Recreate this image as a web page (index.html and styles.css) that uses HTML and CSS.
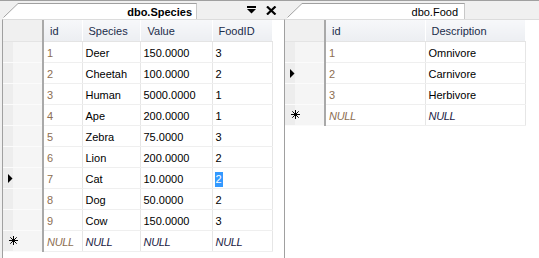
FILE: index.html
```html
<!DOCTYPE html>
<html>
<head>
<meta charset="utf-8">
<link rel="stylesheet" href="styles.css">
</head>
<body>
<div class="wrap">
  <section class="pane pane-left">
    <div class="strip">
      <svg class="slant" width="18" height="18" viewBox="0 0 18 18"><path d="M0 18 L0 16.5 L14.5 2 L18 2 L18 18 Z" fill="#fff"/><path d="M0.5 16.5 L15 2.5 L18 2.5" fill="none" stroke="#a0a0a0" stroke-width="1"/></svg>
      <div class="tab tab-active">dbo.Species</div>
      <div class="tools">
        <svg width="10" height="8" viewBox="0 0 10 8"><rect x="0" y="0" width="9" height="2" fill="#000"/><path d="M0 3 L9 3 L4.5 7.5 Z" fill="#000"/></svg>
        <svg width="11" height="9" viewBox="0 0 11 9"><path d="M1 0.5 L9.5 8.5 M9.5 0.5 L1 8.5" stroke="#000" stroke-width="2.2"/></svg>
      </div>
    </div>
    <div class="body">
      <table class="grid grid-species">
        <thead>
          <tr><th class="rh"></th><th class="c-id">id</th><th class="c-sp">Species</th><th class="c-val">Value</th><th class="c-fid">FoodID</th></tr>
        </thead>
        <tbody>
          <tr><td class="rh"></td><td class="idv">1</td><td>Deer</td><td>150.0000</td><td>3</td></tr>
          <tr><td class="rh"></td><td class="idv">2</td><td>Cheetah</td><td>100.0000</td><td>2</td></tr>
          <tr><td class="rh"></td><td class="idv">3</td><td>Human</td><td>5000.0000</td><td>1</td></tr>
          <tr><td class="rh"></td><td class="idv">4</td><td>Ape</td><td>200.0000</td><td>1</td></tr>
          <tr><td class="rh"></td><td class="idv">5</td><td>Zebra</td><td>75.0000</td><td>3</td></tr>
          <tr><td class="rh"></td><td class="idv">6</td><td>Lion</td><td>200.0000</td><td>2</td></tr>
          <tr><td class="rh"><svg class="arrow" width="5" height="9" viewBox="0 0 5 9"><path d="M0 0 L4.5 4.5 L0 9 Z" fill="#000"/></svg></td><td class="idv">7</td><td>Cat</td><td>10.0000</td><td><span class="sel">2</span></td></tr>
          <tr><td class="rh"></td><td class="idv">8</td><td>Dog</td><td>50.0000</td><td>2</td></tr>
          <tr><td class="rh"></td><td class="idv">9</td><td>Cow</td><td>150.0000</td><td>3</td></tr>
          <tr><td class="rh"><svg class="star" width="9" height="9" viewBox="0 0 9 9"><path d="M4.5 0 V9 M0 4.5 H9 M1.3 1.3 L7.7 7.7 M7.7 1.3 L1.3 7.7" stroke="#000" stroke-width="1"/></svg></td><td class="idv null">NULL</td><td class="null">NULL</td><td class="null">NULL</td><td class="null">NULL</td></tr>
        </tbody>
      </table>
    </div>
  </section>
  <section class="pane pane-right">
    <div class="strip">
      <svg class="slant" width="18" height="18" viewBox="0 0 18 18"><path d="M0 18 L0 16.5 L14.5 2 L18 2 L18 18 Z" fill="#fff"/><path d="M0.5 16.5 L15 2.5 L18 2.5" fill="none" stroke="#a0a0a0" stroke-width="1"/></svg>
      <div class="tab tab-food">dbo.Food</div>
    </div>
    <div class="body">
      <table class="grid grid-food">
        <thead>
          <tr><th class="rh"></th><th class="c-fid2">id</th><th class="c-desc">Description</th></tr>
        </thead>
        <tbody>
          <tr><td class="rh"></td><td class="idv">1</td><td>Omnivore</td></tr>
          <tr><td class="rh"><svg class="arrow" width="5" height="9" viewBox="0 0 5 9"><path d="M0 0 L4.5 4.5 L0 9 Z" fill="#000"/></svg></td><td class="idv">2</td><td>Carnivore</td></tr>
          <tr><td class="rh"></td><td class="idv">3</td><td>Herbivore</td></tr>
          <tr><td class="rh"><svg class="star" width="9" height="9" viewBox="0 0 9 9"><path d="M4.5 0 V9 M0 4.5 H9 M1.3 1.3 L7.7 7.7 M7.7 1.3 L1.3 7.7" stroke="#000" stroke-width="1"/></svg></td><td class="idv null">NULL</td><td class="null">NULL</td></tr>
        </tbody>
      </table>
    </div>
  </section>
</div>
</body>
</html>
```
FILE: styles.css
```css
html, body {
  margin: 0;
  padding: 0;
  background: #fff;
}
body {
  font-family: "Liberation Sans", Arial, sans-serif;
  font-size: 11px;
  color: #000;
}
.wrap {
  display: flex;
  width: 539px;
  height: 258px;
  border-top: 1px solid #a0a0a0;
  box-sizing: border-box;
}
.pane {
  display: flex;
  flex-direction: column;
}
.pane-left {
  width: 284px;
  background: linear-gradient(to right, #f0f0f0 0 2px, #fff 2px);
}
.pane-right {
  flex: 1;
  background: linear-gradient(to right, #f0f0f0 0 1px, #fff 1px);
}
.strip {
  height: 18px;
  display: flex;
  align-items: flex-end;
  background: #f0f0f0;
}
.pane-left .strip { padding-left: 3px; }
.pane-right .strip { padding-left: 3px; }
.slant {
  display: block;
  flex: none;
}
.tab {
  height: 16px;
  box-sizing: border-box;
  background: #fff;
  border-top: 1px solid #a0a0a0;
  border-right: 1px solid #c8c8c8;
  display: flex;
  align-items: center;
  justify-content: flex-end;
  padding: 1px 4px 0 0;
  color: #000;
}
.tab-active {
  width: 176px;
  font-weight: bold;
}
.tab-food {
  width: 160px;
  padding-right: 6px;
}
.tools {
  display: flex;
  align-items: center;
  gap: 9px;
  height: 18px;
  margin-left: 50px;
}
.tools svg { display: block; }
.body {
  flex: 1;
  border-left: 1px solid #a0a0a0;
  border-top: 1px solid #dcdcdc;
}
.pane-left .body { margin-left: 2px; }
.grid {
  border-collapse: collapse;
  table-layout: fixed;
}
.grid th, .grid td {
  padding: 0 0 0 3px;
  text-align: left;
  white-space: nowrap;
  overflow: hidden;
  box-sizing: border-box;
  vertical-align: middle;
}
.grid th {
  height: 21px;
  font-weight: normal;
  color: #1b2c4a;
  padding: 1px 0 0 6px;
  background: linear-gradient(#f7f8fa, #eceef2);
  border-right: 1px solid #fff;
  border-bottom: 1px solid #e4e4e4;
}
.grid td {
  height: 21px;
  padding-top: 2px;
  border-right: 1px solid #e6e6e6;
  border-bottom: 1px solid #efefef;
}
.grid .rh {
  width: 40px;
  padding: 0;
  border-right: 2px solid #a9a9a9;
}
.grid th.rh {
  background: #f0f0f0;
}
.grid td.rh {
  background: linear-gradient(to right, #ededed 0 10px, #f5f5f5 10px);
  border-bottom: 1px solid #fbfbfb;
  position: relative;
}
.arrow {
  position: absolute;
  left: 5px;
  top: 6px;
}
.star {
  position: absolute;
  left: 6px;
  top: 5px;
}
.c-id { width: 39px; }
.c-sp { width: 58px; }
.c-val { width: 72px; }
.c-fid { width: 60px; }
.c-fid2 { width: 100px; }
.c-desc { width: 100px; }
.grid .c-val { padding-left: 7px; }
.idv { color: #8c6e52; }
.null {
  font-style: italic;
  color: #1a1a44;
  letter-spacing: -0.3px;
}
.idv.null { color: #8c6e52; }
.sel {
  background: #3399ff;
  color: #fff;
  padding: 1px 1px 2px 1px;
  margin-left: -1px;
}
```
